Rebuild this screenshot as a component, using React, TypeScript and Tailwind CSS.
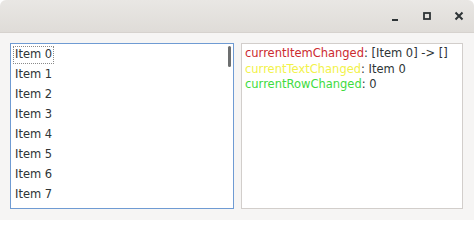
export default function App() {
  const items = Array.from({ length: 8 }, (_, i) => `Item ${i}`);

  return (
    <div className="w-[474px] h-[220px] bg-white overflow-hidden" style={{ fontFamily: '"DejaVu Sans", sans-serif' }}>
      <div className="h-full flex flex-col rounded-t-[6px] overflow-hidden">
        {/* title bar */}
        <div className="h-[33px] shrink-0 bg-gradient-to-b from-[#e9e7e4] to-[#dfdcd8] border-b border-[#d6d2ce] flex items-center justify-end pr-[9px] gap-[20px]">
          <svg width="12" height="12" viewBox="0 0 12 12" className="mt-[2px]">
            <rect x="3" y="8" width="6" height="2" fill="#2e3436" />
          </svg>
          <svg width="12" height="12" viewBox="0 0 12 12">
            <rect x="3" y="3" width="6" height="6" fill="none" stroke="#2e3436" strokeWidth="1.8" />
          </svg>
          <svg width="12" height="12" viewBox="0 0 12 12">
            <path d="M2.5 2.5 L9.5 9.5 M9.5 2.5 L2.5 9.5" stroke="#2e3436" strokeWidth="2" />
          </svg>
        </div>

        {/* body */}
        <div className="h-[187px] shrink-0 bg-[#f6f5f4] flex gap-[7px] pl-[10px] pr-[11px] pt-[10px] pb-[11px]">
          <div className="relative w-[224px] h-[166px] border border-[#6f9bd3] bg-white overflow-hidden">
            <div className="flex flex-col pt-[1px]">
              {items.map((item, i) => (
                <div key={item} className="h-[20px] shrink-0 flex items-center pl-[2px] text-[11.5px] text-[#2e3436]">
                  <span className={i === 0 ? 'px-[1px] h-[18px] flex items-center border border-dotted border-[#8a8a8a]' : 'px-[2px]'}>
                    {item}
                  </span>
                </div>
              ))}
            </div>
            <div className="absolute right-[2px] top-[2px] w-[3px] h-[21px] rounded-full bg-[#6d6f70]" />
          </div>

          <div className="w-[222px] h-[166px] border border-[#d2cecb] bg-white pt-[2px] pl-[3px] text-[11.5px] leading-[15.5px] text-[#2e3436]">
            <div>
              <span className="text-[#cc2a2f]">currentItemChanged</span>: [Item 0] -&gt; []
            </div>
            <div>
              <span className="text-[#f2f24a]">currentTextChanged</span>: Item 0
            </div>
            <div>
              <span className="text-[#3edb3e]">currentRowChanged</span>: 0
            </div>
          </div>
        </div>
      </div>
    </div>
  );
}
